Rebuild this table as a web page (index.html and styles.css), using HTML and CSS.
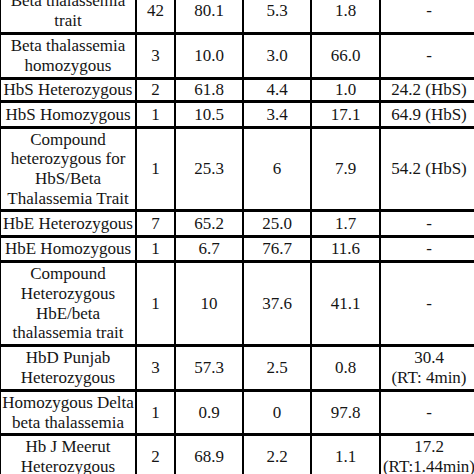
FILE: index.html
```html
<!DOCTYPE html>
<html>
<head>
<meta charset="utf-8">
<link rel="stylesheet" href="styles.css">
</head>
<body>
<div class="frame">
<table class="grid">
  <colgroup>
    <col class="c1"><col class="c2"><col class="c3"><col class="c4"><col class="c5"><col class="c6">
  </colgroup>
  <tbody>
    <tr class="h45"><td>Beta thalassemia<br>trait</td><td>42</td><td>80.1</td><td>5.3</td><td>1.8</td><td>-</td></tr>
    <tr class="h45"><td>Beta thalassemia<br>homozygous</td><td>3</td><td>10.0</td><td>3.0</td><td>66.0</td><td>-</td></tr>
    <tr class="h23"><td>HbS Heterozygous</td><td>2</td><td>61.8</td><td>4.4</td><td>1.0</td><td>24.2 (HbS)</td></tr>
    <tr class="h26"><td>HbS Homozygous</td><td>1</td><td>10.5</td><td>3.4</td><td>17.1</td><td>64.9 (HbS)</td></tr>
    <tr class="h83"><td>Compound<br>heterozygous for<br>HbS/Beta<br>Thalassemia Trait</td><td>1</td><td>25.3</td><td>6</td><td>7.9</td><td>54.2 (HbS)</td></tr>
    <tr class="h26"><td>HbE Heterozygous</td><td>7</td><td>65.2</td><td>25.0</td><td>1.7</td><td>-</td></tr>
    <tr class="h25"><td>HbE Homozygous</td><td>1</td><td>6.7</td><td>76.7</td><td>11.6</td><td>-</td></tr>
    <tr class="h84"><td>Compound<br>Heterozygous<br>HbE/beta<br>thalassemia trait</td><td>1</td><td>10</td><td>37.6</td><td>41.1</td><td>-</td></tr>
    <tr class="h45"><td>HbD Punjab<br>Heterozygous</td><td>3</td><td>57.3</td><td>2.5</td><td>0.8</td><td>30.4<br>(RT: 4min)</td></tr>
    <tr class="h44"><td>Homozygous Delta<br>beta thalassemia</td><td>1</td><td>0.9</td><td>0</td><td>97.8</td><td>-</td></tr>
    <tr class="h45"><td>Hb J Meerut<br>Heterozygous</td><td>2</td><td>68.9</td><td>2.2</td><td>1.1</td><td>17.2<br>(RT:1.44min)</td></tr>
  </tbody>
</table>
</div>
</body>
</html>
```
FILE: styles.css
```css
html, body {
  margin: 0;
  padding: 0;
  background: #fff;
  overflow: hidden;
}
.frame {
  width: 474px;
  height: 474px;
  overflow: hidden;
}
.grid {
  border-collapse: collapse;
  table-layout: fixed;
  width: 478px;
  margin-top: -13px;
  margin-left: -1px;
  font-family: "Liberation Serif", "Times New Roman", serif;
  font-size: 17px;
  line-height: 19.6px;
  color: #151515;
}
.c1 { width: 136px; }
.c2 { width: 39px; }
.c3 { width: 68px; }
.c4 { width: 68px; }
.c5 { width: 69px; }
.c6 { width: 98px; }
.grid td {
  padding: 0;
  text-align: center;
  vertical-align: middle;
  white-space: nowrap;
  border-top: 3px solid #000;
  border-bottom: 3px solid #000;
  border-left: 2px solid #000;
  border-right: 2px solid #000;
}
.h23 { height: 23px; }
.h25 { height: 25px; }
.h26 { height: 26px; }
.h44 { height: 44px; }
.h45 { height: 45px; }
.h83 { height: 83px; }
.h84 { height: 84px; }
```
